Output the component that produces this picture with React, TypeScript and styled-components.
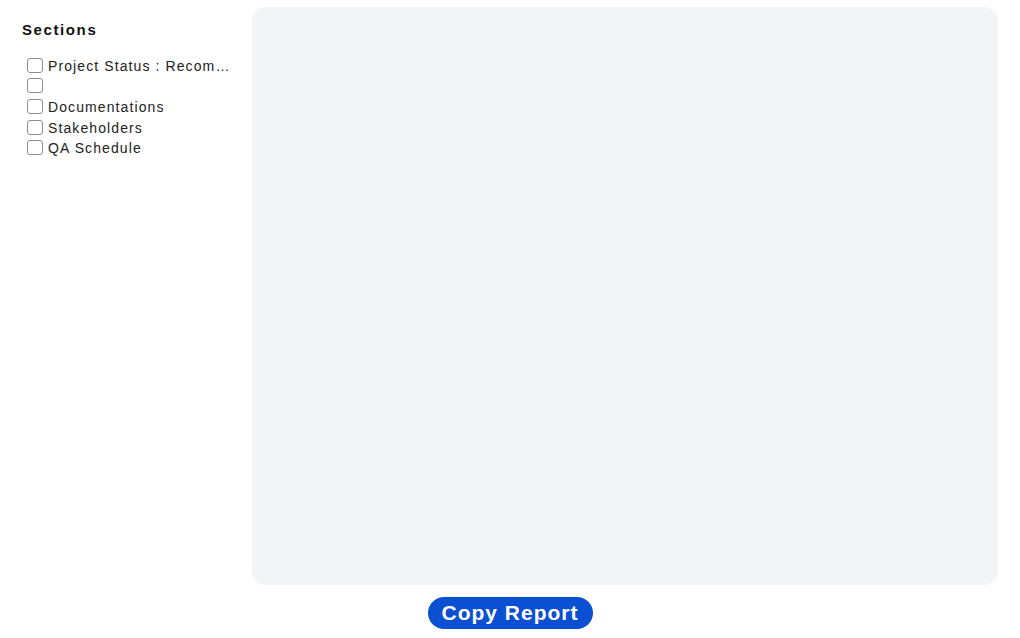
import React from 'react';
import styled, { createGlobalStyle } from 'styled-components';

const GlobalStyle = createGlobalStyle`
  html, body {
    margin: 0;
    padding: 0;
    background: #ffffff;
    font-family: "Liberation Sans", Arial, sans-serif;
  }
`;

const Page = styled.div`
  display: flex;
  flex-direction: column;
  width: 1020px;
  height: 638px;
`;

const Main = styled.div`
  display: flex;
  padding: 7px 22px 0 22px;
`;

const Sidebar = styled.div`
  width: 218px;
  margin-right: 12px;
  padding-top: 14px;
`;

const Heading = styled.h3`
  margin: 0 0 15px 0;
  font-size: 15px;
  font-weight: bold;
  color: #111;
  letter-spacing: 1.6px;
`;

const SectionList = styled.div`
  display: flex;
  flex-direction: column;
  padding-left: 5px;
`;

const SectionRow = styled.label`
  display: flex;
  align-items: flex-end;
  height: 20.7px;
  font-size: 14px;
  color: #222;
  letter-spacing: 1.1px;
  white-space: nowrap;
  overflow: hidden;
`;

const Box = styled.input`
  appearance: none;
  flex: none;
  width: 16px;
  height: 15px;
  margin: 0 5px 1px 0;
  border: 1px solid #8e8e8e;
  border-radius: 3px;
  background: #fff;
`;

const Label = styled.span`
  overflow: hidden;
  text-overflow: ellipsis;
  line-height: 16px;
`;

const Panel = styled.div`
  flex: 1;
  height: 578px;
  background: #f3f4f6;
  border-radius: 14px;
`;

const Footer = styled.div`
  display: flex;
  justify-content: center;
  padding-top: 12px;
`;

const CopyButton = styled.button`
  height: 32px;
  padding: 0 14px;
  border: none;
  border-radius: 16px;
  background: #0b4fd2;
  color: #fff;
  font-family: "Liberation Sans", Arial, sans-serif;
  font-size: 21px;
  font-weight: bold;
  letter-spacing: 1px;
  cursor: pointer;
`;

const sections = [
  'Project Status : Recommendations',
  '',
  'Documentations',
  'Stakeholders',
  'QA Schedule',
];

export default function App() {
  return (
    <Page>
      <GlobalStyle />
      <Main>
        <Sidebar>
          <Heading>Sections</Heading>
          <SectionList>
            {sections.map((s, i) => (
              <SectionRow key={`section${i}`}>
                <Box type="checkbox" />
                <Label>{s}</Label>
              </SectionRow>
            ))}
          </SectionList>
        </Sidebar>
        <Panel />
      </Main>
      <Footer>
        <CopyButton>Copy Report</CopyButton>
      </Footer>
    </Page>
  );
}
